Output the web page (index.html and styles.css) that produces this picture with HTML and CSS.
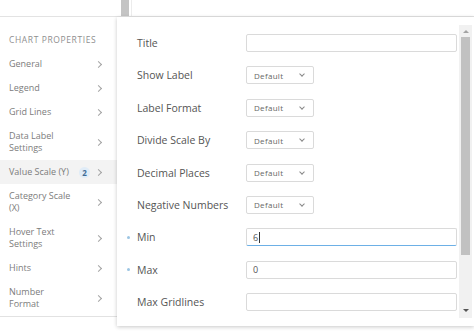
FILE: index.html
```html
<!DOCTYPE html>
<html lang="en">
<head>
    <meta charset="UTF-8">
    <title>Chart Properties</title>
    <link rel="stylesheet" href="styles.css">
</head>
<body>
    <div class="topbar">
        <span class="top-gap"></span>
        <span class="top-thumb"></span>
        <span class="top-rest"></span>
    </div>
    <div class="main">
        <aside class="sidebar">
            <div class="side-title">Chart Properties</div>
            <ul class="side-list">
                <li><span class="side-text">General</span><span class="chev"></span></li>
                <li><span class="side-text">Legend</span><span class="chev"></span></li>
                <li><span class="side-text">Grid Lines</span><span class="chev"></span></li>
                <li><span class="side-text">Data Label<br>Settings</span><span class="chev"></span></li>
                <li class="active"><span class="side-text">Value Scale (Y)</span><span class="badge">2</span><span class="chev"></span></li>
                <li><span class="side-text">Category Scale<br>(X)</span><span class="chev"></span></li>
                <li><span class="side-text">Hover Text<br>Settings</span><span class="chev"></span></li>
                <li><span class="side-text">Hints</span><span class="chev"></span></li>
                <li><span class="side-text">Number<br>Format</span><span class="chev"></span></li>
            </ul>
        </aside>
        <section class="panel">
            <div class="fields">
                <div class="field"><span class="dot"></span><span class="label">Title</span><div class="box"></div></div>
                <div class="field"><span class="dot"></span><span class="label">Show Label</span><div class="select">Default<span class="arrow"></span></div></div>
                <div class="field"><span class="dot"></span><span class="label">Label Format</span><div class="select">Default<span class="arrow"></span></div></div>
                <div class="field"><span class="dot"></span><span class="label">Divide Scale By</span><div class="select">Default<span class="arrow"></span></div></div>
                <div class="field"><span class="dot"></span><span class="label">Decimal Places</span><div class="select">Default<span class="arrow"></span></div></div>
                <div class="field"><span class="dot"></span><span class="label">Negative Numbers</span><div class="select">Default<span class="arrow"></span></div></div>
                <div class="field"><span class="dot on"></span><span class="label">Min</span><div class="box focus">6<span class="caret"></span></div></div>
                <div class="field"><span class="dot on"></span><span class="label">Max</span><div class="box">0</div></div>
                <div class="field"><span class="dot"></span><span class="label">Max Gridlines</span><div class="box"></div></div>
            </div>
            <div class="scroll">
                <span class="sc-up"></span>
                <span class="sc-thumb"></span>
                <span class="sc-down"></span>
            </div>
        </section>
    </div>
</body>
</html>
```

FILE: styles.css
```css
body {
    margin: 0;
    width: 474px;
    height: 333px;
    overflow: hidden;
    background: #fff;
    font-family: "Open Sans", Arial, sans-serif;
}
.topbar {
    display: flex;
    height: 16px;
    border-bottom: 1px solid #e3e3e3;
}
.top-gap {
    width: 121px;
}
.top-thumb {
    width: 8px;
    background: #c4c4c4;
}
.top-rest {
    flex: 1;
    margin-left: 2px;
    border-left: 1px solid #ececec;
}
.main {
    display: flex;
    align-items: flex-start;
}
.sidebar {
    width: 117px;
    flex-shrink: 0;
    border-bottom: 1px solid #e2e2e2;
}
.side-title {
    padding: 17px 0 6px 9px;
    line-height: 12px;
    font-size: 8.5px;
    letter-spacing: 0.6px;
    text-transform: uppercase;
    color: #8f8f8f;
}
.side-list {
    list-style: none;
    margin: 0;
    padding: 0;
}
.side-list li {
    display: flex;
    align-items: center;
    padding: 6px 0 6px 9px;
    line-height: 12px;
    font-size: 9px;
    color: #7c7c7c;
}
.side-list li.active {
    background: #f3f3f3;
}
.side-text {
    flex: 1;
}
.badge {
    width: 11px;
    height: 11px;
    margin-right: 6px;
    border-radius: 50%;
    background: #e0ecf7;
    color: #3f6b94;
    font-size: 8px;
    font-weight: bold;
    line-height: 11px;
    text-align: center;
}
.chev {
    width: 4px;
    height: 4px;
    margin-right: 16px;
    border-top: 1px solid #a3a3a3;
    border-right: 1px solid #a3a3a3;
    transform: rotate(45deg);
}
.panel {
    flex: 1;
    display: flex;
    height: 309px;
    background: #fff;
    box-shadow: 0 1px 4px rgba(0, 0, 0, 0.22);
}
.fields {
    flex: 1;
    padding: 9.8px 0 0 10px;
}
.field {
    display: flex;
    align-items: center;
    height: 32.4px;
}
.dot {
    width: 3px;
    height: 3px;
    margin-right: 7px;
    border-radius: 50%;
}
.dot.on {
    background: #9cc5e3;
}
.label {
    width: 109px;
    font-size: 10.5px;
    color: #555;
}
.box {
    display: flex;
    align-items: center;
    box-sizing: border-box;
    width: 211px;
    height: 18px;
    padding-left: 6px;
    border: 1px solid #dadada;
    border-radius: 2px;
    font-size: 9px;
    color: #555;
}
.box.focus {
    border-bottom: 1px solid #6db0e6;
}
.caret {
    width: 1px;
    height: 11px;
    margin-left: 1px;
    background: #333;
}
.select {
    display: flex;
    align-items: center;
    justify-content: space-between;
    box-sizing: border-box;
    width: 68px;
    height: 18px;
    padding: 0 9px 0 7px;
    border: 1px solid #dadada;
    border-radius: 2px;
    font-size: 8px;
    letter-spacing: 0.3px;
    color: #666;
}
.arrow {
    width: 3px;
    height: 3px;
    margin-top: -2px;
    border-right: 1px solid #888;
    border-bottom: 1px solid #888;
    transform: rotate(45deg);
}
.scroll {
    display: flex;
    flex-direction: column;
    align-items: center;
    width: 13px;
    height: 293px;
    margin: 8px 2px 0 1px;
    background: #f1f1f1;
}
.sc-up, .sc-down {
    width: 0;
    height: 0;
    border-left: 3px solid transparent;
    border-right: 3px solid transparent;
}
.sc-up {
    margin-top: 5px;
    border-bottom: 3px solid #a3a3a3;
}
.sc-thumb {
    width: 9px;
    height: 218px;
    margin-top: 4px;
    background: #c1c1c1;
}
.sc-down {
    margin-top: 54px;
    border-top: 3px solid #555;
}
```
